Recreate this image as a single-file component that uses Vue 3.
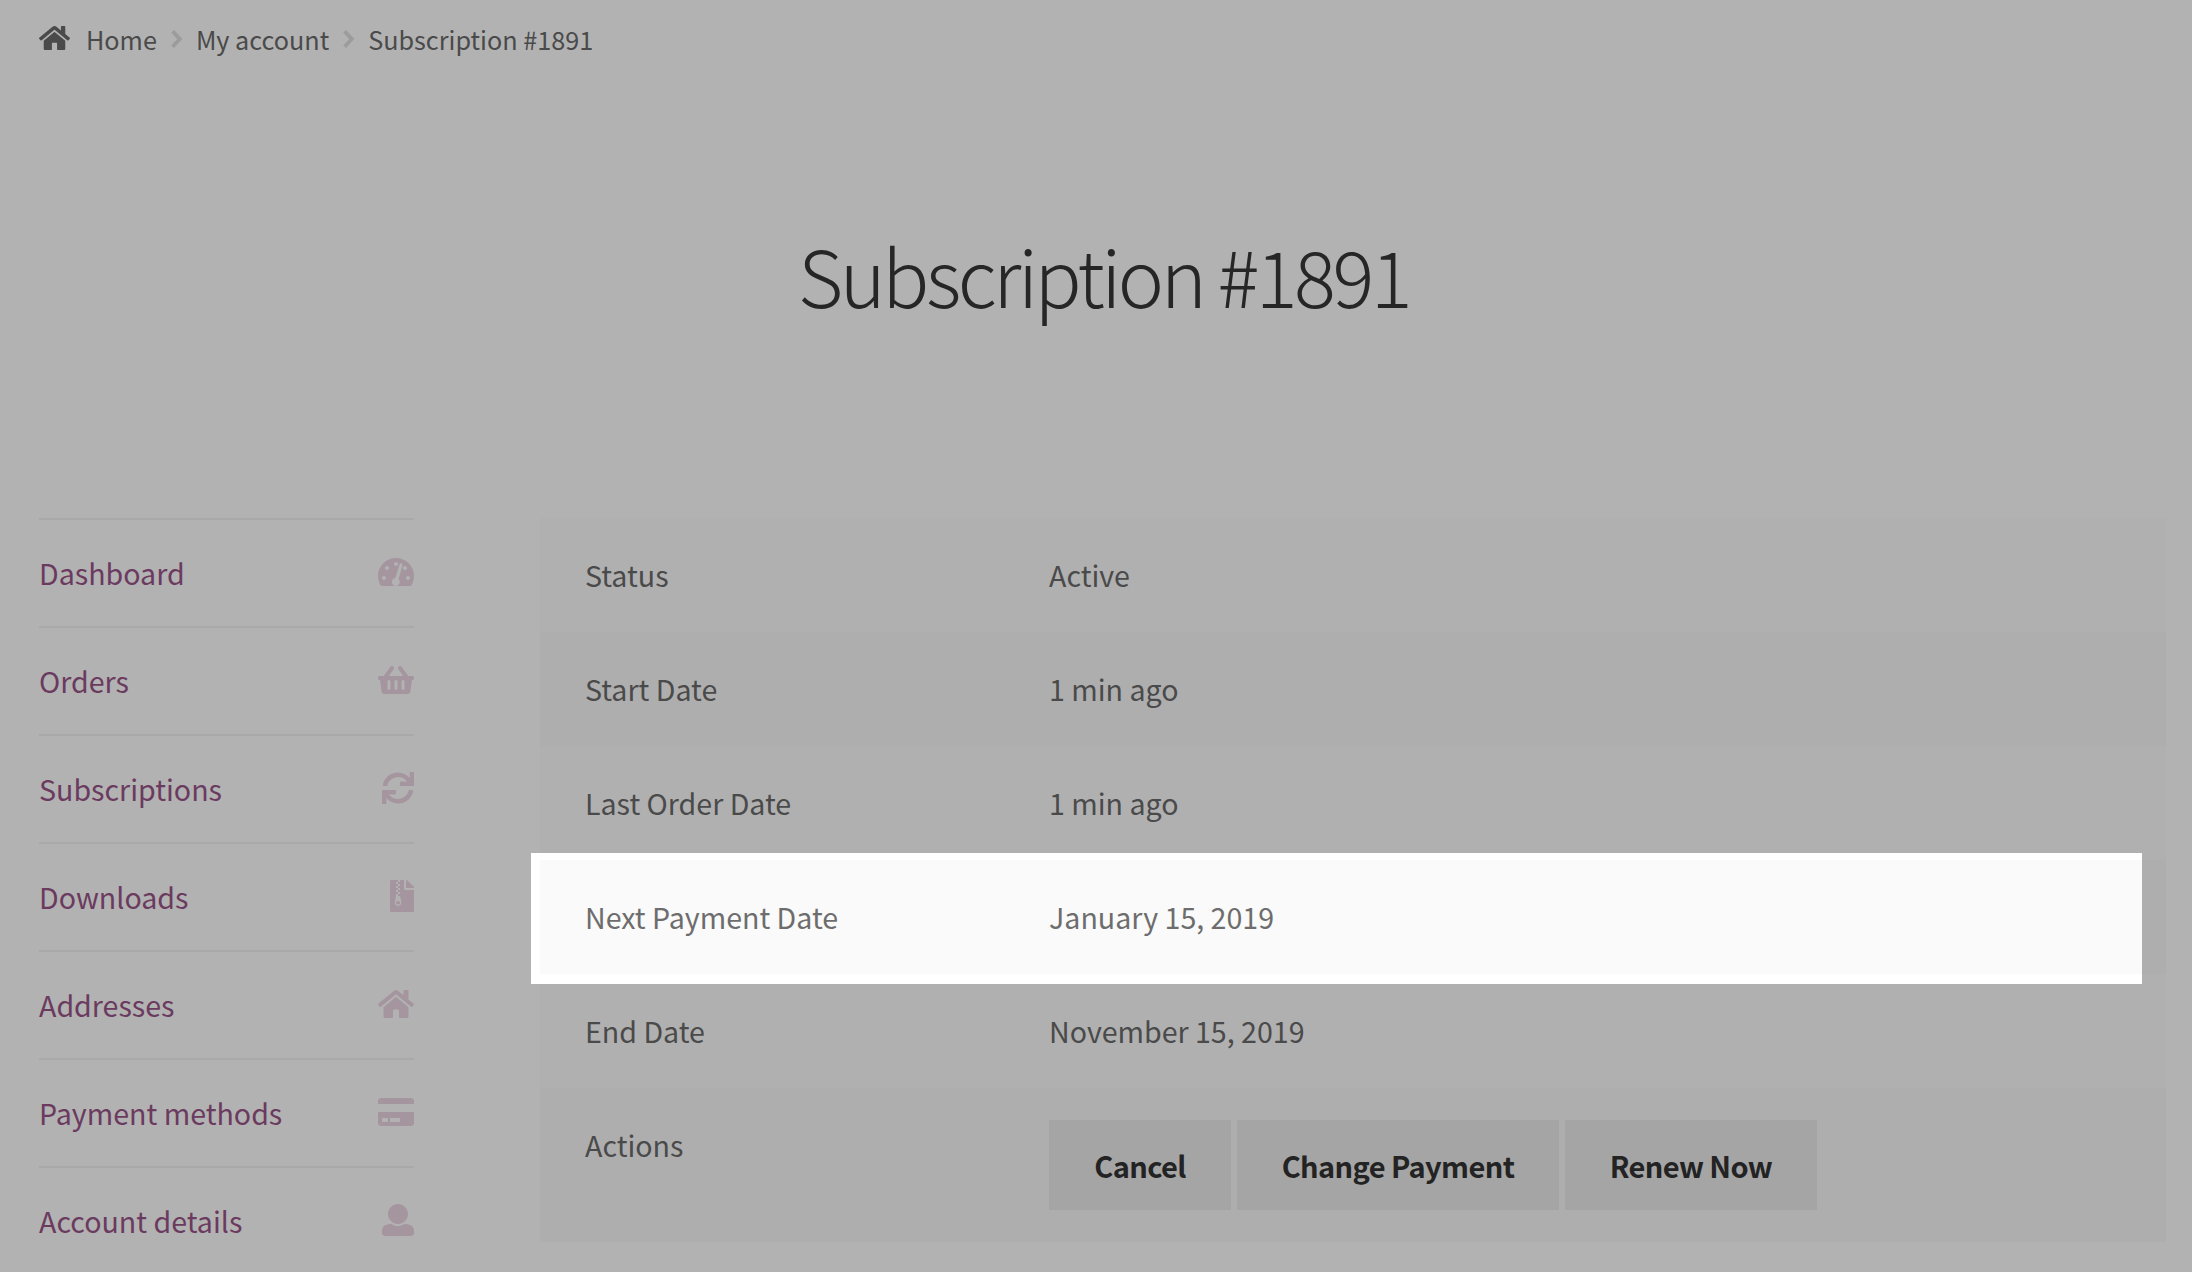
<script setup>
const nav = [
  { label: 'Dashboard', vb: '0 0 576 512', w: 36, d: 'M288 32C128.94 32 0 160.94 0 320c0 52.800 14.250 102.260 39.060 144.800 5.610 9.620 16.300 15.200 27.440 15.200h443c11.140 0 21.830-5.580 27.440-15.200C561.750 422.260 576 372.800 576 320c0-159.060-128.940-288-288-288zM288 96a32 32 0 1 1-.01 0zM144 160a32 32 0 1 1-.01 0zM432 160a32 32 0 1 1-.01 0zM96 320a32 32 0 1 1-.01 0zM480 320a32 32 0 1 1-.01 0zM390.770 151.590L329 369a64 64 0 1 1-51.500-16.500L343.400 134A24 24 0 0 1 390.770 151.590z' },
  { label: 'Orders', vb: '0 0 576 512', w: 36, d: 'M576 216v16c0 13.255-10.745 24-24 24h-8l-26.113 182.788C514.509 462.435 494.257 480 470.370 480H105.630c-23.887 0-44.139-17.565-47.518-41.212L32 256h-8c-13.255 0-24-10.745-24-24v-16c0-13.255 10.745-24 24-24h67.341l106.780-146.821c10.395-14.292 30.407-17.453 44.701-7.058 14.293 10.395 17.453 30.408 7.058 44.701L170.477 192h235.046L326.120 82.821c-10.395-14.292-7.234-34.306 7.059-44.701 14.291-10.395 34.306-7.235 44.701 7.058L484.659 192H552c13.255 0 24 10.745 24 24zM312 392V280c0-13.255-10.745-24-24-24s-24 10.745-24 24v112c0 13.255 10.745 24 24 24s24-10.745 24-24zm112 0V280c0-13.255-10.745-24-24-24s-24 10.745-24 24v112c0 13.255 10.745 24 24 24s24-10.745 24-24zm-224 0V280c0-13.255-10.745-24-24-24s-24 10.745-24 24v112c0 13.255 10.745 24 24 24s24-10.745 24-24z' },
  { label: 'Subscriptions', vb: '0 0 512 512', w: 32, d: 'M440.935 12.574l3.966 82.766C399.416 41.904 331.674 8 256 8 134.813 8 33.933 94.924 12.296 209.824 10.908 217.193 16.604 224 24.103 224h49.084c5.570 0 10.377-3.842 11.676-9.259C103.407 137.408 172.931 80 256 80c60.893 0 114.512 30.856 146.104 77.801l-101.530-4.865c-6.845-.328-12.574 5.133-12.574 11.986v47.411c0 6.627 5.373 12 12 12h200.333c6.627 0 12-5.373 12-12V12c0-6.627-5.373-12-12-12h-47.411c-6.853 0-12.315 5.729-11.987 12.574zM256 432c-60.895 0-114.517-30.858-146.109-77.805l101.868 4.871c6.845.327 12.573-5.134 12.573-11.986v-47.412c0-6.627-5.373-12-12-12H12c-6.627 0-12 5.373-12 12V500c0 6.627 5.373 12 12 12h47.385c6.863 0 12.328-5.745 11.985-12.599l-4.129-82.575C112.725 470.166 180.405 504 256 504c121.187 0 222.067-86.924 243.704-201.824 1.388-7.369-4.308-14.176-11.807-14.176h-49.084c-5.570 0-10.377 3.842-11.676 9.259C408.593 374.592 339.069 432 256 432z' },
  { label: 'Downloads', vb: '0 0 384 512', w: 24, d: 'M377 105L279.100 7c-4.500-4.500-10.600-7-17-7H256v128h128v-6.100c0-6.300-2.500-12.400-7-16.900zM128.400 336c-17.900 0-32.400 12.100-32.400 27 0 15 14.600 27 32.500 27s32.400-12.100 32.400-27-14.600-27-32.500-27zM224 136V0h-63.600v32h-32V0H24C10.700 0 0 10.700 0 24v464c0 13.300 10.700 24 24 24h336c13.300 0 24-10.700 24-24V160H248c-13.200 0-24-10.800-24-24zM95.900 32h32v32h-32V32zm32.300 384c-33.200 0-58-30.400-51.400-62.900L96.400 256v-32h32v-32h-32v-32h32v-32h-32V96h32V64h32v32h-32v32h32v32h-32v32h32v32h-32v32h22.100c5.700 0 10.700 4.100 11.800 9.700l17.300 87.700c6.400 32.400-18.400 62.600-51.500 62.600z' },
  { label: 'Addresses', vb: '0 0 576 512', w: 36, d: 'M488 312.700V456c0 13.300-10.700 24-24 24H348c-6.600 0-12-5.400-12-12V356c0-6.600-5.400-12-12-12h-72c-6.600 0-12 5.400-12 12v112c0 6.600-5.400 12-12 12H112c-13.300 0-24-10.700-24-24V312.700c0-3.600 1.600-7 4.400-9.300l188-154.800c4.400-3.600 10.800-3.600 15.300 0l188 154.800c2.700 2.300 4.300 5.700 4.300 9.300zm83.600-60.900L488 182.900V44.400c0-6.600-5.400-12-12-12h-56c-6.600 0-12 5.400-12 12V117l-89.500-73.700c-17.700-14.600-43.300-14.600-61 0L4.400 251.800c-5.100 4.200-5.800 11.800-1.600 16.900l25.500 31c4.200 5.100 11.800 5.800 16.900 1.600l235.200-193.700c4.400-3.600 10.800-3.600 15.300 0l235.200 193.700c5.100 4.200 12.700 3.500 16.900-1.600l25.500-31c4.200-5.200 3.400-12.700-1.700-16.900z' },
  { label: 'Payment methods', vb: '0 0 576 512', w: 36, d: 'M0 432c0 26.500 21.500 48 48 48h480c26.500 0 48-21.500 48-48V256H0v176zm192-68c0-6.600 5.400-12 12-12h136c6.600 0 12 5.400 12 12v40c0 6.600-5.400 12-12 12H204c-6.600 0-12-5.400-12-12v-40zm-128 0c0-6.600 5.400-12 12-12h72c6.600 0 12 5.400 12 12v40c0 6.600-5.400 12-12 12H76c-6.600 0-12-5.400-12-12v-40zM576 80v48H0V80c0-26.500 21.500-48 48-48h480c26.500 0 48 21.500 48 48z' },
  { label: 'Account details', vb: '0 0 512 512', w: 32, d: 'M256 0c88.366 0 160 71.634 160 160s-71.634 160-160 160S96 248.366 96 160 167.634 0 256 0zm183.283 333.821l-71.313-17.828c-74.923 53.891-165.179 44.440-223.940 0l-71.313 17.828C29.100 344.505 0 381.798 0 424.685V464c0 26.510 21.490 48 48 48h416c26.510 0 48-21.490 48-48v-39.315c0-42.887-29.100-80.180-72.717-90.864z' },
]
const rows = [
  { k: 'Status', v: 'Active' },
  { k: 'Start Date', v: '1 min ago' },
  { k: 'Last Order Date', v: '1 min ago' },
  { k: 'Next Payment Date', v: 'January 15, 2019', hl: true },
  { k: 'End Date', v: 'November 15, 2019' },
]
const homePath = nav[4].d
</script>

<template>
  <div class="page">
    <nav class="crumbs">
      <svg class="crumb-home" viewBox="0 0 576 512"><path :d="homePath" /></svg>
      <span>Home</span>
      <svg class="chev" viewBox="0 0 10 14"><path d="M2 1 L7.500 7 L2 13" /></svg>
      <span>My account</span>
      <svg class="chev" viewBox="0 0 10 14"><path d="M2 1 L7.500 7 L2 13" /></svg>
      <span>Subscription #1891</span>
    </nav>
    <h1 class="title">Subscription #1891</h1>
    <div class="columns">
      <ul class="side">
        <li v-for="n in nav" :key="n.label" class="side-item">
          <span>{{ n.label }}</span>
          <svg class="ico" :viewBox="n.vb" :width="n.w" height="32"><path :d="n.d" /></svg>
        </li>
      </ul>
      <main class="panel">
        <div class="tbl">
          <div v-for="(r, i) in rows" :key="r.k" class="row" :class="{ alt: i % 2 === 1, hl: r.hl }">
            <span class="key">{{ r.k }}</span>
            <span class="val">{{ r.v }}</span>
          </div>
          <div class="row actions">
            <span class="key">Actions</span>
            <div class="btns">
              <span class="btn b1">Cancel</span>
              <span class="btn b2">Change Payment</span>
              <span class="btn b3">Renew Now</span>
            </div>
          </div>
        </div>
      </main>
    </div>
  </div>
</template>

<style scoped>
.page {
  width: 2192px;
  height: 1272px;
  overflow: hidden;
  background: #b2b2b2;
  font-family: "Noto Sans CJK SC", "Liberation Sans", sans-serif;
  font-size: 28.6px;
  color: #4a4a4a;
  box-sizing: border-box;
}
.crumbs {
  display: flex;
  align-items: center;
  height: 78px;
  padding-left: 39px;
  font-size: 25.2px;
}
.crumb-home { width: 31px; height: 28px; fill: #4a4a4a; margin-right: 16px; margin-top: -2px; }
.chev { width: 13px; height: 18px; margin: 0 13px; fill: none; stroke: #9c9c9c; stroke-width: 3; }
.title {
  margin: 0;
  height: 440px;
  padding-top: 157px;
  padding-left: 15px;
  box-sizing: border-box;
  text-align: center;
  font-size: 78px;
  letter-spacing: -3.4px;
  font-weight: 300;
  line-height: 1;
  color: #262626;
}
.columns { display: flex; }
.side { list-style: none; margin: 0; padding: 0 0 0 39px; width: 375px; flex: none; }
.side-item {
  display: flex;
  align-items: center;
  justify-content: space-between;
  height: 108px;
  color: #6b3a5f;
  box-shadow: inset 0 2px 0 #a9a9a9;
}
.ico { fill: #a5959f; flex: none; }
.panel { margin-left: 126px; width: 1626px; }
.tbl { background: #b0b0b0; }
.row {
  display: flex;
  align-items: center;
  height: 114px;
  box-sizing: border-box;
  padding-bottom: 2px;
  position: relative;
  padding-left: 45px;
}
.row.alt { background: #aeaeae; }
.row.hl { z-index: 1; color: #6d6d6d; }
.row.hl::before {
  content: "";
  position: absolute;
  left: -9px;
  right: 24px;
  top: -7px;
  bottom: -10px;
  background: #fff;
  z-index: -1;
}
.row.hl::after {
  content: "";
  position: absolute;
  left: 0;
  right: 24px;
  top: 0;
  bottom: 0;
  background: #fafafa;
  z-index: -1;
}
.key { width: 464px; flex: none; }
.actions { height: 154px; padding-bottom: 0; align-items: flex-start; background: #aeaeae; }
.actions .key { margin-top: 36px; }
.btns { display: flex; gap: 6px; margin-top: 32px; }
.btn {
  display: flex;
  align-items: center;
  justify-content: center;
  height: 90px;
  background: #a5a5a5;
  color: #232323;
  font-weight: 700;
  font-size: 29px;
  letter-spacing: -0.6px;
}
.b1 { width: 182px; }
.b2 { width: 322px; }
.b3 { width: 252px; }
</style>
